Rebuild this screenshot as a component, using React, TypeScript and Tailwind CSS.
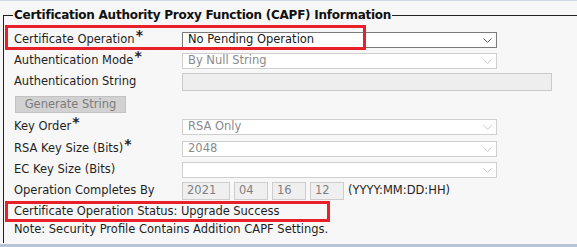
import React from 'react';

const font = { fontFamily: '"DejaVu Sans", Verdana, sans-serif' };

function Chevron({ disabled }: { disabled?: boolean }) {
  return (
    <svg width="9" height="6" viewBox="0 0 9 6" className="absolute right-[4px] top-1/2 -translate-y-[40%]">
      <polyline points="0.5,0.8 4.5,4.8 8.5,0.8" fill="none" stroke={disabled ? '#c4c4c4' : '#555'} strokeWidth="1" />
    </svg>
  );
}

function Select({ value, disabled }: { value: string; disabled?: boolean }) {
  return (
    <div
      className={`relative w-[315px] h-[16px] bg-white border flex items-center pl-[5px] ${
        disabled ? 'border-[#cfcfcf] text-[#8a8a8a]' : 'border-[#7a7a7a] text-[#1a1a1a]'
      }`}
    >
      {value}
      <Chevron disabled={disabled} />
    </div>
  );
}

function Label({ text, req }: { text: string; req?: boolean }) {
  return (
    <div className="w-[168px] shrink-0 flex items-start">
      <span>{text}</span>
      {req && <span className="text-[14px] font-bold leading-none relative -top-[3px] ml-[1px]">*</span>}
    </div>
  );
}

function Row({ h, children }: { h: string; children: React.ReactNode }) {
  return <div className={`flex items-center ${h}`}>{children}</div>;
}

export default function App() {
  return (
    <div className="relative w-[577px] h-[247px] overflow-hidden bg-[#f7f7f7] flex flex-col text-[11.5px] text-[#1f1f1f]" style={font}>
      <div className="h-px bg-[#d2d9e6]" />
      <div className="flex-1 pl-[3px] pt-[6px]">
        {/* legend */}
        <div className="flex items-center h-[16px]">
          <div className="w-[10px] h-[8px] self-end border-t border-l border-[#222]" />
          <div className="px-[1px] font-bold text-[12px] text-[#111] tracking-[-0.25px]">
            Certification Authority Proxy Function (CAPF) Information
          </div>
          <div className="flex-1 h-px bg-[#222]" />
        </div>

        <div className="border-l border-[#222] pl-[10px] pt-[6px] h-[220px]">
          <Row h="h-[21px]">
            <Label text="Certificate Operation" req />
            <Select value="No Pending Operation" />
          </Row>
          <Row h="h-[21px]">
            <Label text="Authentication Mode" req />
            <Select value="By Null String" disabled />
          </Row>
          <Row h="h-[22px]">
            <Label text="Authentication String" />
            <div className="w-[370px] h-[18px] bg-[#eeeeee] border border-[#cacaca]" />
          </Row>
          <Row h="h-[23px]">
            <button className="ml-[1px] w-[111px] h-[17px] bg-[#d2d2d2] border border-[#c2c2c2] text-[#7c7c7c] flex items-center justify-center">
              Generate String
            </button>
          </Row>
          <Row h="h-[22px]">
            <Label text="Key Order" req />
            <Select value="RSA Only" disabled />
          </Row>
          <Row h="h-[21px]">
            <Label text="RSA Key Size (Bits)" req />
            <Select value="2048" disabled />
          </Row>
          <Row h="h-[21px]">
            <Label text="EC Key Size (Bits)" />
            <Select value="" disabled />
          </Row>
          <Row h="h-[21px]">
            <Label text="Operation Completes By" />
            <div className="flex gap-[4px] text-[#808080]">
              {[
                ['2021', 'w-[48px]'],
                ['04', 'w-[34px]'],
                ['16', 'w-[34px]'],
                ['12', 'w-[34px]'],
              ].map(([v, w]) => (
                <div key={v} className={`${w} h-[18px] bg-[#efefef] border border-[#cdcdcd] flex items-center pl-[4px]`}>
                  {v}
                </div>
              ))}
            </div>
            <span className="ml-[4px]">(YYYY:MM:DD:HH)</span>
          </Row>
          <Row h="h-[21px]">
            <span className="tracking-[-0.05px]">Certificate Operation Status: Upgrade Success</span>
          </Row>
          <Row h="h-[15px]">
            <span>Note: Security Profile Contains Addition CAPF Settings.</span>
          </Row>
        </div>
      </div>
      <div className="h-[3px] bg-[#b9c3d4]" />

      {/* red highlight annotations */}
      <div className="absolute left-[5px] top-[25px] w-[361px] h-[25px] border-[3px] border-[#e8202a]" />
      <div className="absolute left-[5px] top-[201px] w-[325px] h-[21px] border-[3px] border-[#e8202a]" />
    </div>
  );
}
